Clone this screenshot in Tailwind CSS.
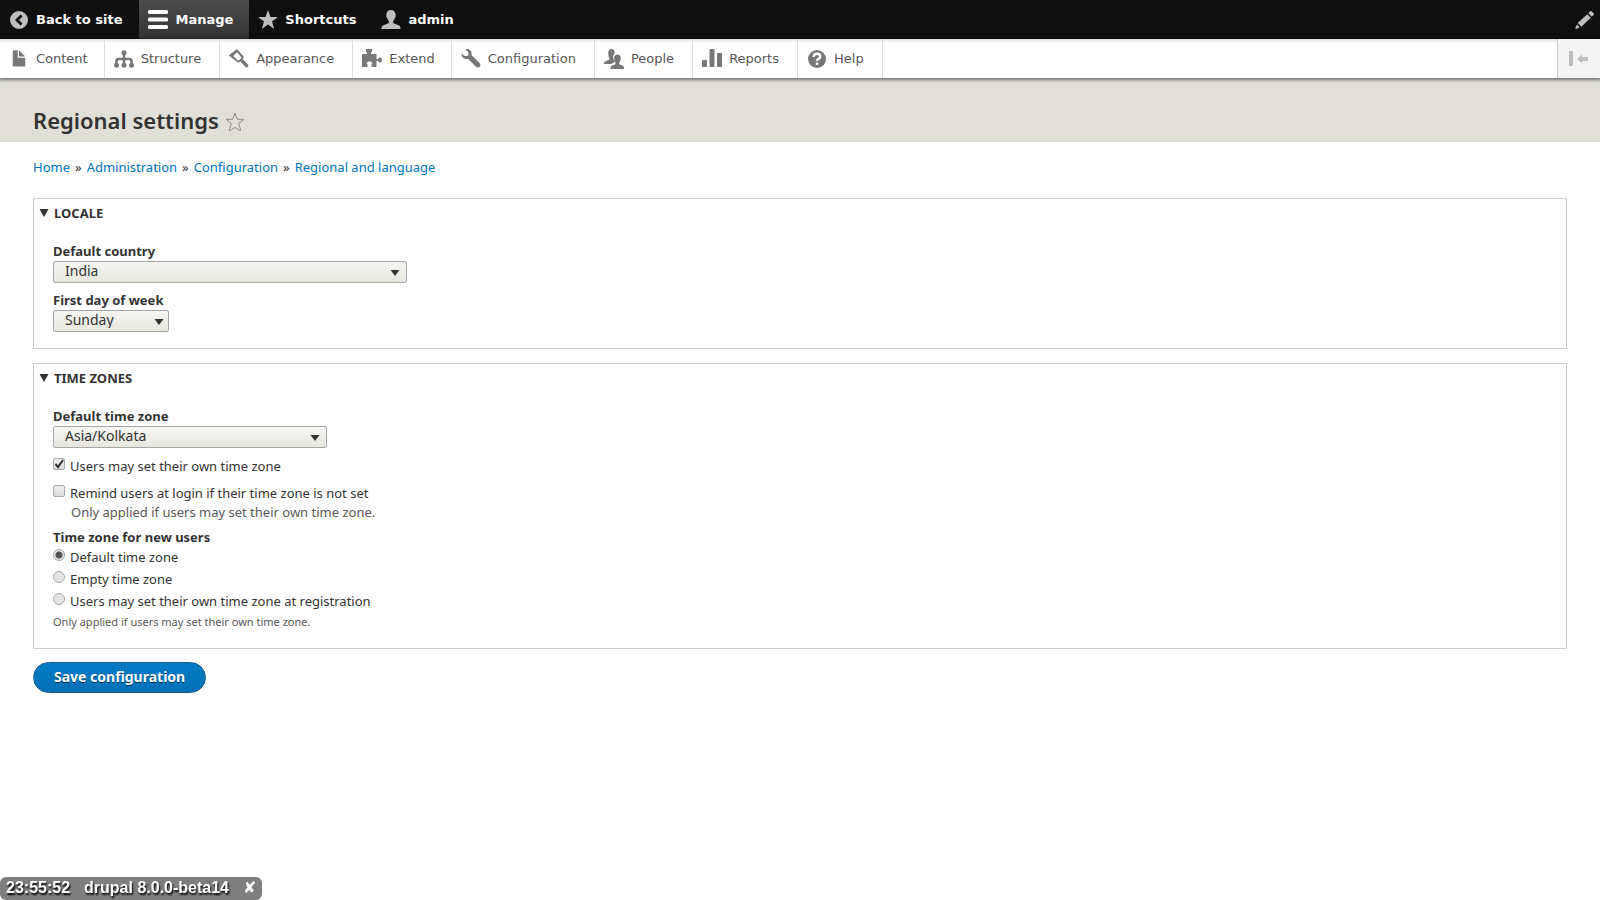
<!DOCTYPE html>
<html lang="en">
  <head>
    <meta charset="utf-8" />
    <meta name="viewport" content="width=device-width, initial-scale=1" />
    <title>Regional settings | Drupal</title>
    <script src="https://cdn.jsdelivr.net/npm/@tailwindcss/browser@4"></script>
  </head>
  <body class="min-h-screen bg-white font-['Noto_Sans',sans-serif] text-[13px] leading-5 text-[#333]">
    <!-- Toolbar -->

    <nav class="flex h-[39px] bg-[#0f0f0f] font-['DejaVu_Sans',Verdana,sans-serif] text-[13px] font-bold text-white">
      <a href="#" class="flex items-center gap-[7px] pl-[9px] pr-[17px]">
        <svg class="size-5 fill-[#bebebe]" viewBox="0 0 20 20">
          <path fill-rule="evenodd" d="M10 1a9 9 0 1 0 0 18a9 9 0 1 0 0-18zM11.500 4.500l2 2-3.500 3.500 3.500 3.500-2 2-5.500-5.500z" />
        </svg>
        Back to site
      </a>
      <a href="#" class="flex items-center gap-[7px] bg-linear-to-b from-[#4d4d4d] to-[#333] pl-[9px] pr-4">
        <svg class="size-5 fill-white" viewBox="0 0 20 20">
          <rect y="0" width="20" height="4" rx="1.5" />
          <rect y="7.500" width="20" height="4" rx="1.5" />
          <rect y="15" width="20" height="4" rx="1.5" />
        </svg>
        Manage
      </a>
      <a href="#" class="flex items-center gap-[7px] pl-[9px] pr-4">
        <svg class="size-5 fill-[#bebebe]" viewBox="0 0 20 20">
          <path d="M10 0l2.500 7h7.300l-5.800 4.500 2.200 7.500-6.200-4.400-6.200 4.400 2.200-7.500-5.800-4.500h7.300z" />
        </svg>
        Shortcuts
      </a>
      <a href="#" class="flex items-center gap-[7px] pl-[9px] pr-4">
        <svg class="size-5 fill-[#bebebe]" viewBox="0 0 20 20">
          <path d="M10 0c3 0 4.700 2 4.700 5 0 2.600-1.200 4.300-2.200 5.500-.8 1-.6 2.500.6 3.100l4.400 1.700c1.300.6 2 1.700 2 3.700h-19c0-2 .7-3.100 2-3.700l4.400-1.700c1.200-.6 1.400-2.100.6-3.100-1-1.200-2.200-2.900-2.200-5.500 0-3 1.700-5 4.700-5z" />
        </svg>
        admin
      </a>
      <button type="button" aria-label="Edit" class="ml-auto flex w-10 items-center justify-end pr-1.5">
        <svg class="size-5 fill-[#bebebe]" viewBox="0 0 20 20">
          <path d="M13.300 4.200l3.500 3.500-9.500 9-3.600-3.600zM14.300 3.200l1.800-1.800c.5-.5 1.100-.5 1.600 0l1.900 1.900c.5.500.5 1.100 0 1.600l-1.800 1.800zM3 14.500l2.800 2.700-3.600 1.800-1-1z" />
        </svg>
      </button>
    </nav>

    <!-- Administration menu -->

    <nav class="relative flex h-[39px] bg-white bg-linear-to-b from-[#ddd] to-white to-10% font-['DejaVu_Sans',Verdana,sans-serif] text-[13px] text-[#565656] shadow-[0_1px_3px_1px_rgba(0,0,0,0.5)]">
      <a href="#" class="flex items-center gap-[7px] border-r border-[#ddd] pl-[9px] pr-4">
        <svg class="size-5 fill-[#787878]" viewBox="0 0 16 16">
          <path d="M12.500 7h-5a.5.5 0 0 1-.5-.5v-5a.5.5 0 0 0-.5-.5h-3a.5.5 0 0 0-.5.5v12a.5.5 0 0 0 .5.5h9a.5.5 0 0 0 .5-.5v-6a.5.5 0 0 0-.5-.5zM8.500 6h4c.3 0 .3-.2.100-.4l-4.200-4.200c-.2-.2-.4-.1-.4.100v4a.5.5 0 0 0 .5.500z" />
        </svg>
        Content
      </a>
      <a href="#" class="flex items-center gap-[7px] border-r border-[#ddd] pl-[9px] pr-[18px]">
        <svg class="size-5 fill-[#787878]" viewBox="0 0 16 16">
          <circle cx="8" cy="3" r="2" /><circle cx="2" cy="13" r="2" /><circle cx="8" cy="13" r="2" /><circle cx="14" cy="13" r="2" />
          <path class="fill-none stroke-[#787878] stroke-2" d="M8 3v10M2 13V9.500Q2 8 3.500 8h9q1.500 0 1.500 1.500V13" />
        </svg>
        Structure
      </a>
      <a href="#" class="flex items-center gap-[7px] border-r border-[#ddd] pl-[9px] pr-[18px]">
        <svg class="size-5 fill-[#787878]" viewBox="0 0 20 20">
          <path fill-rule="evenodd" d="M7.500.6q.6-.5 1.100.1l6 6.800q.6.800 0 1.500l-.9 1 5.200 5.500q1.100 1.400 0 2.500-1.200 1.100-2.600-.2l-5.200-5.500-1.100 1.100q-.7.500-1.500-.1l-8.100-6.300q-.6-.6 0-1.200zM4.300 6.900l4.600 4.500q.4.300.8 0l2.500-2.300q.3-.4 0-.8l-4.100-5z" />
        </svg>
        Appearance
      </a>
      <a href="#" class="flex items-center gap-[7px] border-r border-[#ddd] pl-[9px] pr-4">
        <svg class="size-5 fill-[#787878]" viewBox="0 0 20 20">
          <path d="M4 0h6v2.500q-1.200.5-1 2.500h5.500v5q.8.800 1.700-.3.900-1.400 2.300-1.200 1.500.3 1.500 2.500t-1.500 2.500q-1.400.2-2.300-1.200-.9-1.100-1.700-.3V18H9.500v-2.200q1-.8.600-2-.6-1.300-2.600-1.300t-2.600 1.300q-.4 1.200.6 2V18H0V5h5q.2-2-1-2.500z" />
        </svg>
        Extend
      </a>
      <a href="#" class="flex items-center gap-[7px] border-r border-[#ddd] pl-[9px] pr-[18px]">
        <svg class="size-5 fill-[#787878]" viewBox="0 0 20 20">
          <path d="M4.500.3C8-.8 11.500 2 10.500 6l8 8c1.300 1.300 1 2.700.2 3.700-1 1-2.600 1.200-3.700.1l-8-8C3.500 11 .3 8.500.5 4.500L3.500 7h2.800l1-1V3.500z" />
        </svg>
        Configuration
      </a>
      <a href="#" class="flex items-center gap-[7px] border-r border-[#ddd] pl-[9px] pr-[18px]">
        <svg class="size-5 fill-[#787878]" viewBox="0 0 20 20">
          <path d="M7.500 0c2 0 3.100 1.300 3.100 3.200 0 .8-.2 1.400-.5 2-1.700 2.200-.8 5.500.9 7.300-.4.900-2.500 1.300-3.800 2.500H0c0-1.800.7-2.400 2-2.900l2.700-1.100c1-.5 1-1.500.4-2.300C4.500 7.400 4.300 5.500 4.300 3.500 4.300 1.400 5.500 0 7.500 0z" />
          <path d="M13.500 5.500c2.100 0 3.300 1.400 3.300 3.700 0 1.700-.6 3.200-1.300 4.200-.6.800-.4 1.700.5 2.200l2.400 1c1.100.5 1.600 1.300 1.600 3.400H6.500c0-2.100.6-2.900 1.700-3.400l2.700-1c.9-.5 1.100-1.400.5-2.200-.7-1-1.300-2.500-1.300-4.200 0-2.300 1.300-3.700 3.400-3.700z" />
        </svg>
        People
      </a>
      <a href="#" class="flex items-center gap-[7px] border-r border-[#ddd] pl-[9px] pr-[18px]">
        <svg class="size-5 fill-[#787878]" viewBox="0 0 20 20">
          <rect y="11" width="5" height="7" rx="1" /><rect x="7.500" width="5" height="18" rx="1" /><rect x="15" y="4" width="5" height="14" rx="1" />
        </svg>
        Reports
      </a>
      <a href="#" class="flex items-center gap-[7px] border-r border-[#ddd] pl-[9px] pr-[18px]">
        <svg class="size-5 fill-[#787878]" viewBox="0 0 20 20">
          <circle cx="10" cy="10" r="9" />
          <path class="fill-none stroke-white stroke-[2.4]" d="M6.700 8q0-3.200 3.300-3.200t3.300 2.700q0 1.500-1.700 2.400t-1.600 2.300" />
          <rect class="fill-white" x="8.700" y="13.500" width="2.600" height="2.500" rx="1" />
        </svg>
        Help
      </a>
      <button type="button" aria-label="Vertical orientation" class="ml-auto flex w-[43px] items-center justify-center border-l border-[#c8c8c8] bg-[#f4f4f4]">
        <svg class="size-5 fill-[#bebebe]" viewBox="0 0 20 20">
          <path d="M0 2h4v15H0zM8 10l5-4.500v2.500h6v4h-6v2.500z" />
        </svg>
      </button>
    </nav>

    <!-- Page title -->

    <header class="flex h-16 items-end gap-1.5 bg-[#e0e0d8] px-[33px] pb-2.5">
      <h1 class="text-[22px] leading-6 font-semibold">Regional settings</h1>
      <button type="button" aria-label="Add to shortcuts">
        <svg class="size-5 fill-none stroke-[#8c8c78]" viewBox="0 0 20 20">
          <path d="M10 1l2.300 6.300h6.700l-5.200 4.100 1.900 6.900q-.2.700-.9.300l-4.800-3.200-4.800 3.200q-.7.400-.9-.3l1.900-6.900-5.200-4.100h6.700z" />
        </svg>
      </button>
    </header>

    <main class="px-[33px] pt-[15px]">
      <!-- Breadcrumb -->

      <nav aria-label="Breadcrumb" class="flex gap-[5px]">
        <a href="#" class="text-[#0074bd]">Home</a> »
        <a href="#" class="text-[#0074bd]">Administration</a> »
        <a href="#" class="text-[#0074bd]">Configuration</a> »
        <a href="#" class="text-[#0074bd]">Regional and language</a>
      </nav>

      <form class="mt-[21px]">
        <!-- Locale -->

        <details open class="border border-[#ccc] pb-4">
          <summary class="flex items-center gap-[5px] px-[5px] pt-1 font-bold uppercase">
            <svg class="h-2 w-2.5 fill-[#333]" viewBox="0 0 10 8"><path d="M.5 0h9L5 8z" /></svg>
            Locale
          </summary>
          <div class="flex flex-col items-start px-[19px] pt-[18px]">
            <label for="country" class="font-bold">Default country</label>
            <div class="relative">
              <select id="country" class="h-[22px] w-[354px] appearance-none rounded-xs border border-[#a6a6a6] bg-linear-to-b from-[#f6f6f3] to-[#e7e7df] pb-0.5 pl-[11px] text-sm leading-4">
                <option>India</option>
              </select>
              <svg class="pointer-events-none absolute top-2 right-[7px] h-2 w-2.5 fill-[#333]" viewBox="0 0 10 8"><path d="M.5 1h9L5 7z" /></svg>
            </div>
            <label for="weekday" class="mt-[7px] font-bold">First day of week</label>
            <div class="relative">
              <select id="weekday" class="h-[22px] w-[116px] appearance-none rounded-xs border border-[#a6a6a6] bg-linear-to-b from-[#f6f6f3] to-[#e7e7df] pb-0.5 pl-[11px] text-sm leading-4">
                <option>Sunday</option>
              </select>
              <svg class="pointer-events-none absolute top-2 right-[5px] h-2 w-2.5 fill-[#333]" viewBox="0 0 10 8"><path d="M.5 1h9L5 7z" /></svg>
            </div>
          </div>
        </details>

        <!-- Time zones -->

        <details open class="mt-3.5 border border-[#ccc] pb-4">
          <summary class="flex items-center gap-[5px] px-[5px] pt-1 font-bold uppercase">
            <svg class="h-2 w-2.5 fill-[#333]" viewBox="0 0 10 8"><path d="M.5 0h9L5 8z" /></svg>
            Time zones
          </summary>
          <div class="flex flex-col items-start px-[19px] pt-[18px]">
            <label for="timezone" class="font-bold">Default time zone</label>
            <div class="relative">
              <select id="timezone" class="h-[22px] w-[274px] appearance-none rounded-xs border border-[#a6a6a6] bg-linear-to-b from-[#f6f6f3] to-[#e7e7df] pb-0.5 pl-[11px] text-sm leading-4">
                <option>Asia/Kolkata</option>
              </select>
              <svg class="pointer-events-none absolute top-2 right-[7px] h-2 w-2.5 fill-[#333]" viewBox="0 0 10 8"><path d="M.5 1h9L5 7z" /></svg>
            </div>
            <label class="mt-2 flex gap-[5px]">
              <span class="relative flex size-3 pt-0.5">
                <input type="checkbox" checked class="peer size-3 shrink-0 appearance-none rounded-xs border border-[#a9a9a9] bg-linear-to-b from-[#eee] to-[#ddd]" />
                <svg class="absolute inset-x-0 top-0.5 hidden size-3 fill-none stroke-[#333] stroke-2 peer-checked:block" viewBox="0 0 12 12"><path d="M2.500 6l2.500 3 5-7" /></svg>
              </span>
              Users may set their own time zone
            </label>
            <label class="mt-[7px] flex gap-[5px]">
              <span class="relative flex size-3 pt-0.5">
                <input type="checkbox" aria-describedby="remind-help" class="size-3 shrink-0 appearance-none rounded-xs border border-[#a9a9a9] bg-linear-to-b from-[#eee] to-[#ddd]" />
              </span>
              Remind users at login if their time zone is not set
            </label>
            <p id="remind-help" class="pl-[18px] text-[13px] leading-[18px] text-[#595959]">Only applied if users may set their own time zone.</p>

            <fieldset class="mt-1.5">
              <legend class="font-bold">Time zone for new users</legend>
              <div class="flex flex-col gap-0.5">
                <label class="flex gap-[5px]">
                  <input type="radio" name="new-users" checked class="mt-0.5 size-3 shrink-0 appearance-none rounded-full border border-[#a9a9a9] bg-[#e4e4e4] checked:bg-[radial-gradient(circle,#555_3px,#e4e4e4_4px)]" />
                  Default time zone
                </label>
                <label class="flex gap-[5px]">
                  <input type="radio" name="new-users" class="mt-0.5 size-3 shrink-0 appearance-none rounded-full border border-[#a9a9a9] bg-[#e4e4e4]" />
                  Empty time zone
                </label>
                <label class="flex gap-[5px]">
                  <input type="radio" name="new-users" class="mt-0.5 size-3 shrink-0 appearance-none rounded-full border border-[#a9a9a9] bg-[#e4e4e4]" />
                  Users may set their own time zone at registration
                </label>
              </div>
              <p class="mt-px text-[11px] leading-5 text-[#595959]">Only applied if users may set their own time zone.</p>
            </fieldset>
          </div>
        </details>

        <button type="submit" class="mt-[13px] h-[31px] rounded-full border border-[#1e5c90] bg-linear-to-b from-[#007bc6] to-[#0071b8] px-5 pb-0.5 text-sm font-bold text-white text-shadow-[0_1px_#0009]">Save configuration</button>
      </form>
    </main>

    <!-- Status badge -->

    <div class="fixed bottom-0 left-0 flex h-[23px] items-center gap-3.5 rounded-md bg-[#7f7f7f] px-1.5 pb-0.5 font-['Liberation_Sans',Arial,sans-serif] text-base font-bold text-white text-shadow-[1px_2px_2px_#000]">
      <span>23:55:52</span>
      <span>drupal 8.0.0-beta14</span>
      <button type="button" aria-label="Close" class="font-['DejaVu_Sans',sans-serif] italic">✘</button>
    </div>
  </body>
</html>
